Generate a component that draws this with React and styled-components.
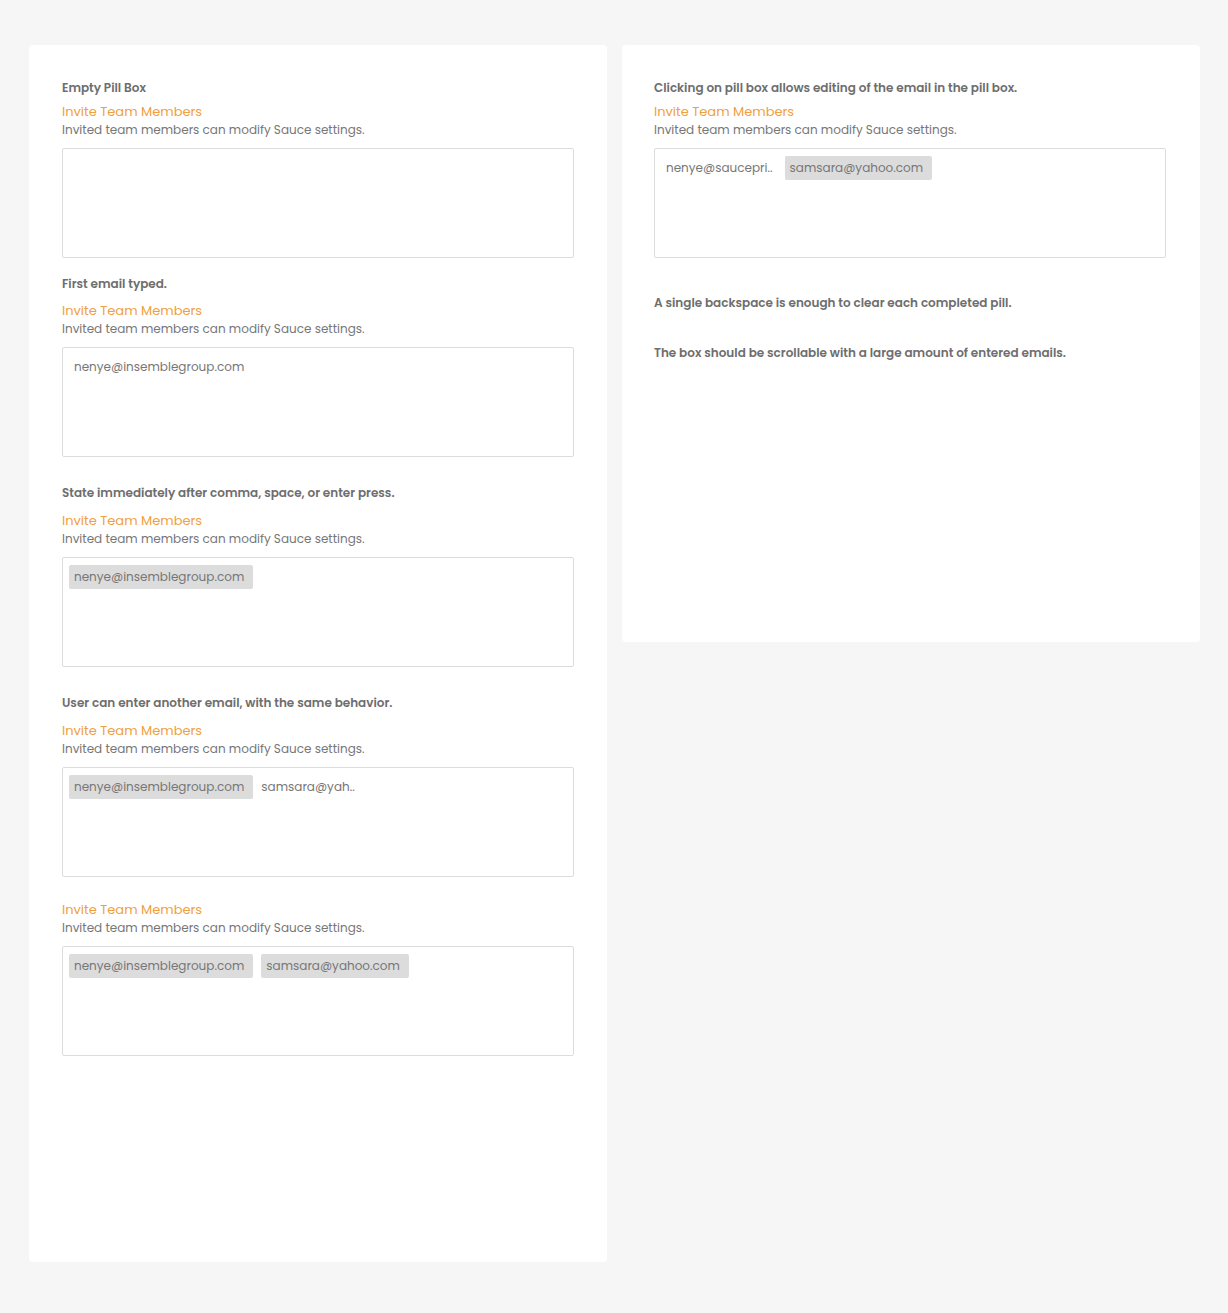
import React from "react";
import styled, { createGlobalStyle } from "styled-components";

const GlobalStyle = createGlobalStyle`
  html, body {
    margin: 0;
    padding: 0;
    background: #f6f6f6;
  }
  body {
    font-family: "Poppins", "Noto Sans", "Liberation Sans", sans-serif;
    color: #777777;
  }
`;

const Page = styled.div`
  display: flex;
  align-items: flex-start;
  gap: 15px;
  padding: 45px 28px 51px 29px;
`;

const Card = styled.div`
  width: 578px;
  min-height: ${(props) => props.height}px;
  box-sizing: border-box;
  background: #ffffff;
  border-radius: 4px;
  padding: 34px ${(props) => (props.right ? "34px 34px 32px" : "33px")};
`;

const Section = styled.div`
  margin-top: ${(props) => props.top || 0}px;
`;

const Note = styled.div`
  font-size: 12px;
  line-height: 16px;
  padding-top: 1px;
  font-weight: 600;
  color: #6e6e6e;
  margin-bottom: ${(props) => props.gap || 0}px;
`;

const Title = styled.div`
  font-size: 13px;
  line-height: 18px;
  color: #f0a03e;
`;

const Desc = styled.div`
  font-size: 12px;
  line-height: 18px;
  color: #777777;
`;

const PillBox = styled.div`
  margin-top: 9px;
  height: 110px;
  box-sizing: border-box;
  border: 1px solid #dcdcdc;
  border-radius: 2px;
  padding: 7px 6px;
  display: flex;
  flex-wrap: wrap;
  align-content: flex-start;
  gap: 8px;
`;

const Pill = styled.span`
  height: 24px;
  line-height: 24px;
  padding: 0 9px 0 5px;
  font-size: 12px;
  color: #777777;
  background: #dcdcdc;
  border-radius: 2px;
  white-space: nowrap;
`;

const Typed = styled.span`
  height: 24px;
  line-height: 24px;
  padding: 0 4px 0 ${(props) => (props.lead ? 5 : 0)}px;
  font-size: 12px;
  color: #777777;
  white-space: nowrap;
`;

const Invite = ({ pills = [], typing, lead }) => (
  <>
    <Title>Invite Team Members</Title>
    <Desc>Invited team members can modify Sauce settings.</Desc>
    <PillBox>
      {lead ? <Typed lead>{lead}</Typed> : null}
      {pills.map((p) => (
        <Pill key={p}>{p}</Pill>
      ))}
      {typing ? <Typed lead={pills.length === 0}>{typing}</Typed> : null}
    </PillBox>
  </>
);

const App = () => {
  return (
    <>
      <GlobalStyle />
      <Page>
        <Card height={1217}>
          <Section>
            <Note gap={7}>Empty Pill Box</Note>
            <Invite />
          </Section>
          <Section top={17}>
            <Note gap={10}>First email typed.</Note>
            <Invite typing="nenye@insemblegroup.com" />
          </Section>
          <Section top={27}>
            <Note gap={11}>State immediately after comma, space, or enter press.</Note>
            <Invite pills={["nenye@insemblegroup.com"]} />
          </Section>
          <Section top={27}>
            <Note gap={11}>User can enter another email, with the same behavior.</Note>
            <Invite pills={["nenye@insemblegroup.com"]} typing="samsara@yah.." />
          </Section>
          <Section top={24}>
            <Invite pills={["nenye@insemblegroup.com", "samsara@yahoo.com"]} />
          </Section>
        </Card>
        <Card height={597} right>
          <Section>
            <Note gap={7}>
              Clicking on pill box allows editing of the email in the pill box.
            </Note>
            <Invite lead="nenye@saucepri.." pills={["samsara@yahoo.com"]} />
          </Section>
          <Section top={36}>
            <Note>A single backspace is enough to clear each completed pill.</Note>
          </Section>
          <Section top={33}>
            <Note>The box should be scrollable with a large amount of entered emails.</Note>
          </Section>
        </Card>
      </Page>
    </>
  );
};

export default App;
